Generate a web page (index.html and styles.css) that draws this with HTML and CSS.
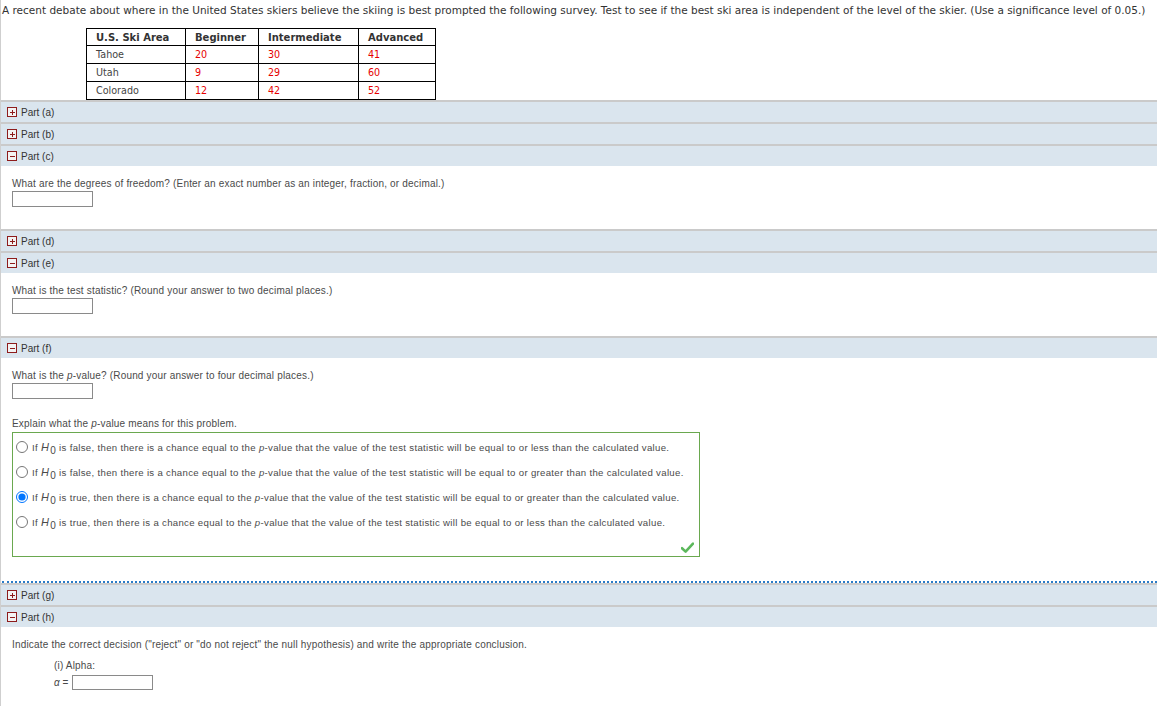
FILE: index.html
```html
<!DOCTYPE html>
<html>
<head>
<meta charset="utf-8">
<link rel="stylesheet" href="styles.css">
</head>
<body>
<div class="page">
  <div class="intro">A recent debate about where in the United States skiers believe the skiing is best prompted the following survey. Test to see if the best ski area is independent of the level of the skier. (Use a significance level of 0.05.)</div>
  <table class="data">
    <tr class="head"><th class="c1">U.S. Ski Area</th><th class="c2">Beginner</th><th class="c3">Intermediate</th><th class="c4">Advanced</th></tr>
    <tr><td>Tahoe</td><td class="num">20</td><td class="num">30</td><td class="num">41</td></tr>
    <tr><td>Utah</td><td class="num">9</td><td class="num">29</td><td class="num">60</td></tr>
    <tr><td>Colorado</td><td class="num">12</td><td class="num">42</td><td class="num">52</td></tr>
  </table>

  <div class="part"><span class="tog plus"></span>Part (a)</div>
  <div class="part"><span class="tog plus"></span>Part (b)</div>
  <div class="part"><span class="tog minus"></span>Part (c)</div>
  <div class="content">
    <div class="q">What are the degrees of freedom? (Enter an exact number as an integer, fraction, or decimal.)</div>
    <input class="box" type="text">
  </div>

  <div class="part"><span class="tog plus"></span>Part (d)</div>
  <div class="part"><span class="tog minus"></span>Part (e)</div>
  <div class="content">
    <div class="q">What is the test statistic? (Round your answer to two decimal places.)</div>
    <input class="box" type="text">
  </div>

  <div class="part"><span class="tog minus"></span>Part (f)</div>
  <div class="content content-f">
    <div class="q">What is the <i>p</i>-value? (Round your answer to four decimal places.)</div>
    <input class="box" type="text">
    <div class="q explain">Explain what the <i>p</i>-value means for this problem.</div>
    <div class="choices">
      <label class="opt"><input type="radio" name="pv"><span>If <i class="h">H</i><sub>0</sub> is false, then there is a chance equal to the <i>p</i>-value that the value of the test statistic will be equal to or less than the calculated value.</span></label>
      <label class="opt"><input type="radio" name="pv"><span>If <i class="h">H</i><sub>0</sub> is false, then there is a chance equal to the <i>p</i>-value that the value of the test statistic will be equal to or greater than the calculated value.</span></label>
      <label class="opt"><input type="radio" name="pv" checked><span>If <i class="h">H</i><sub>0</sub> is true, then there is a chance equal to the <i>p</i>-value that the value of the test statistic will be equal to or greater than the calculated value.</span></label>
      <label class="opt"><input type="radio" name="pv"><span>If <i class="h">H</i><sub>0</sub> is true, then there is a chance equal to the <i>p</i>-value that the value of the test statistic will be equal to or less than the calculated value.</span></label>
      <div class="checkrow">
        <svg width="13" height="11" viewBox="0 0 13 11"><path d="M1 6.2 L4.6 9.6 L12 1.6" fill="none" stroke="#5cb85c" stroke-width="2.6" stroke-linecap="round" stroke-linejoin="round"/></svg>
      </div>
    </div>
  </div>

  <div class="dotted"></div>
  <div class="part"><span class="tog plus"></span>Part (g)</div>
  <div class="part"><span class="tog minus"></span>Part (h)</div>
  <div class="content content-h">
    <div class="q">Indicate the correct decision ("reject" or "do not reject" the null hypothesis) and write the appropriate conclusion.</div>
    <div class="sub">
      <div class="q">(i) Alpha:</div>
      <div class="alpha"><span class="alabel"><i>α</i> =</span><input class="box" type="text"></div>
    </div>
  </div>
</div>
</body>
</html>
```

FILE: styles.css
```css
html, body {
  margin: 0;
  padding: 0;
  background: #fff;
}
.page {
  border-left: 1px solid #cfcfcf;
  min-height: 706px;
  font-family: "Liberation Sans", Arial, sans-serif;
  color: #444;
}
.intro {
  font-family: "DejaVu Sans", Verdana, sans-serif;
  font-size: 10.5px;
  line-height: 14px;
  padding: 3px 0 0 1px;
  white-space: nowrap;
  color: #333;
}
.data {
  border-collapse: collapse;
  margin: 11px 0 0 85px;
  font-family: "DejaVu Sans", Verdana, sans-serif;
  font-size: 9.6px;
  color: #444;
}
.data tr {
  height: 18px;
}
.data tr.head {
  height: 17px;
}
.data th, .data td {
  border: 1px solid #000;
  padding: 0 0 0 9px;
  text-align: left;
}
.data th {
  font-weight: bold;
  font-size: 10px;
  color: #333;
}
.data .c1 { width: 89px; }
.data .c2 { width: 63px; }
.data .c3 { width: 90px; }
.data .c4 { width: 67px; }
.data .num { color: #e60000; }

.part {
  display: flex;
  align-items: center;
  height: 20px;
  border-top: 2px solid #cacaca;
  background: #dae5ee;
  padding-left: 6px;
  font-size: 10px;
  color: #333;
}
.tog {
  width: 8px;
  height: 8px;
  border: 1px solid #8e1c1c;
  background: #f3f3f3;
  margin-right: 4px;
  position: relative;
  flex: none;
}
.tog::before {
  content: "";
  position: absolute;
  left: 1.5px;
  top: 3.5px;
  width: 5px;
  height: 1px;
  background: #8e1c1c;
}
.tog.plus::after {
  content: "";
  position: absolute;
  left: 3.5px;
  top: 1.5px;
  width: 1px;
  height: 5px;
  background: #8e1c1c;
}
.content {
  padding: 12px 0 22px 11px;
}
.q {
  font-size: 10px;
  line-height: 12px;
  letter-spacing: 0.18px;
  color: #4a4a4a;
  white-space: nowrap;
}
.box {
  display: block;
  box-sizing: border-box;
  width: 81px;
  height: 16px;
  margin: 1px 0 0 0;
  border: 1px solid #8a8a8a;
  background: #fff;
  padding: 0;
}
.explain {
  margin-top: 19px;
}
.choices {
  margin-top: 2px;
  width: 686px;
  border: 1px solid #6aa84f;
  padding-top: 1px;
}
.opt {
  display: flex;
  align-items: center;
  height: 25px;
  font-size: 9.6px;
  letter-spacing: 0.32px;
  color: #4a4a4a;
  white-space: nowrap;
}
.opt input {
  width: 12px;
  height: 12px;
  margin: 0 4px 0 3px;
  flex: none;
}
.opt .h {
  font-size: 11px;
}
.opt sub {
  font-size: 10px;
  line-height: 0;
  vertical-align: baseline;
  position: relative;
  top: 3px;
  margin-left: 1px;
}
.checkrow {
  height: 22px;
  display: flex;
  justify-content: flex-end;
  align-items: flex-start;
  padding: 8px 5px 0 0;
  box-sizing: border-box;
}
.content-f {
  padding-bottom: 24px;
}
.dotted {
  border-top: 2px dotted #2a7bc7;
  margin-left: 1px;
}
.content-h {
  padding-bottom: 0;
}
.sub {
  margin: 9px 0 0 42px;
}
.alpha {
  display: flex;
  align-items: center;
  margin-top: 3px;
}
.alabel {
  font-size: 10px;
  color: #4a4a4a;
  white-space: nowrap;
  margin-right: 4px;
}
.alpha .box {
  height: 15px;
  margin: 0;
}
```
